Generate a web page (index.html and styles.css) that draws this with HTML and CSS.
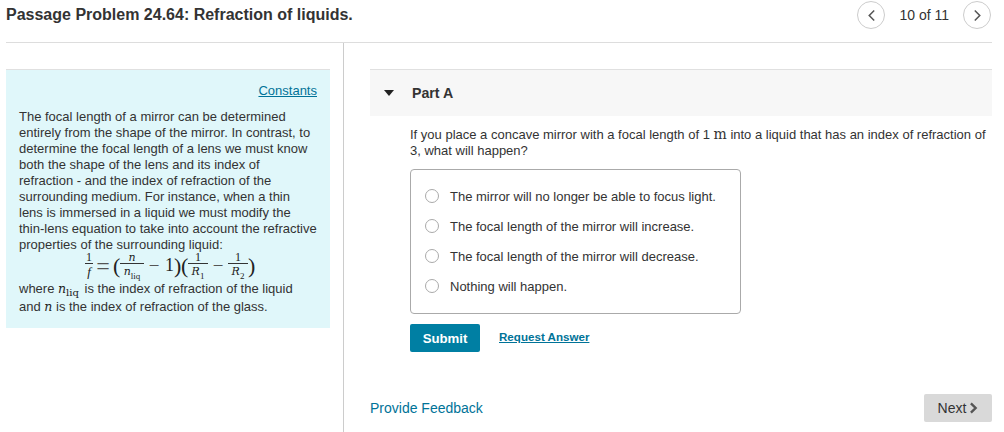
FILE: index.html
```html
<!DOCTYPE html>
<html lang="en">
<head>
<meta charset="utf-8">
<title>Passage Problem 24.64</title>
<link rel="stylesheet" href="styles.css">
</head>
<body>
<div class="page">
  <header class="top">
    <h1 class="title">Passage Problem 24.64: Refraction of liquids.</h1>
    <nav class="pager">
      <span class="circle"><svg viewBox="0 0 10 14" width="9" height="13"><path d="M8 1.5 2.5 7 8 12.5" fill="none" stroke="#555" stroke-width="1.7"/></svg></span>
      <span class="count">10 of 11</span>
      <span class="circle"><svg viewBox="0 0 10 14" width="9" height="13"><path d="M2 1.5 7.5 7 2 12.5" fill="none" stroke="#555" stroke-width="1.7"/></svg></span>
    </nav>
  </header>
  <div class="columns">
    <aside class="left">
      <div class="panel">
        <div class="const"><a href="#">Constants</a></div>
        <p class="passage">The focal length of a mirror can be determined<br>entirely from the shape of the mirror. In contrast, to<br>determine the focal length of a lens we must know<br>both the shape of the lens and its index of<br>refraction - and the index of refraction of the<br>surrounding medium. For instance, when a thin<br>lens is immersed in a liquid we must modify the<br>thin-lens equation to take into account the refractive<br>properties of the surrounding liquid:</p>
        <div class="eq">
          <span class="frac first"><span class="num">1</span><span class="den"><i>f</i></span></span>
          <span class="op eqs">=</span>
          <span class="par">(</span>
          <span class="frac nfrac"><span class="num"><i>n</i></span><span class="den"><i>n</i><sub>liq</sub></span></span>
          <span class="op">−</span><span class="one">1</span><span class="par">)</span><span class="par">(</span>
          <span class="frac"><span class="num">1</span><span class="den"><i>R</i><sub>1</sub></span></span>
          <span class="op">−</span>
          <span class="frac"><span class="num">1</span><span class="den"><i>R</i><sub>2</sub></span></span>
          <span class="par">)</span>
        </div>
        <p class="after">where <span class="m"><i>n</i><sub>liq</sub></span> is the index of refraction of the liquid<br>and <span class="m"><i>n</i></span> is the index of refraction of the glass.</p>
      </div>
    </aside>
    <main class="right">
      <div class="part">
        <span class="tri"></span>
        <h2 class="part-name">Part A</h2>
      </div>
      <div class="body">
        <p class="q">If you place a concave mirror with a focal length of 1 <span class="unit">m</span> into a liquid that has an index of refraction of<br>3, what will happen?</p>
        <div class="options">
          <label class="opt"><span class="radio"></span>The mirror will no longer be able to focus light.</label>
          <label class="opt"><span class="radio"></span>The focal length of the mirror will increase.</label>
          <label class="opt"><span class="radio"></span>The focal length of the mirror will decrease.</label>
          <label class="opt"><span class="radio"></span>Nothing will happen.</label>
        </div>
        <div class="actions">
          <button class="submit">Submit</button>
          <a class="req" href="#">Request Answer</a>
        </div>
      </div>
      <div class="foot">
        <a class="feedback" href="#">Provide Feedback</a>
        <button class="next">Next<svg viewBox="0 0 10 14" width="9" height="12"><path d="M2 1.5 7.5 7 2 12.5" fill="none" stroke="#555" stroke-width="2.8"/></svg></button>
      </div>
    </main>
  </div>
</div>
</body>
</html>
```
FILE: styles.css
```css
* { box-sizing: border-box; }
html, body { margin: 0; padding: 0; background: #fff; }
body { font-family: "Liberation Sans", Arial, sans-serif; color: #333; font-size: 13px; height: 432px; overflow: hidden; }
.page { width: 1004px; height: 432px; padding: 0 12px 0 6px; display: flex; flex-direction: column; }
.top { height: 43px; flex: none; display: flex; justify-content: space-between; align-items: flex-start; border-bottom: 1px solid #ddd; }
.title { margin: 6px 0 0; font-size: 16px; line-height: 18px; font-weight: 700; color: #333; }
.pager { display: flex; align-items: center; margin: 1px 1px 0 0; }
.circle { width: 28px; height: 28px; border: 1px solid #ccc; border-radius: 50%; display: flex; align-items: center; justify-content: center; background: #fff; }
.count { font-size: 14px; margin: 0 14px; }
.columns { flex: 1; display: flex; min-height: 0; }
.left { width: 338px; flex: none; border-right: 1px solid #ccc; padding-top: 26px; }
.panel { width: 324px; height: 259px; background: #e0f7fa; border-top: 1px solid #e0e0e0; padding: 13px 13px 0; }
.const { text-align: right; line-height: 16px; }
.const a { color: #007398; }
.passage { margin: 10px 0 0; line-height: 16px; color: #333; }
.eq { height: 29px; display: flex; align-items: center; font-family: "Liberation Serif", serif; font-size: 15px; padding-left: 66px; margin-top: -2px; color: #222; }
.frac { display: inline-flex; flex-direction: column; align-items: center; width: 20px; }
.frac.first { width: 8px; }
.frac.nfrac { width: 24px; }
.frac .num { border-bottom: 1px solid #333; font-size: 12px; line-height: 11px; width: 100%; text-align: center; }
.frac .den { font-size: 13px; line-height: 14px; white-space: nowrap; }
.frac i { font-family: "DejaVu Serif", serif; font-size: 11px; }
.frac.first .den { padding-top: 1px; }
.frac.first i { font-family: "Liberation Serif", serif; font-size: 13px; }
.den sub { font-family: "Liberation Serif", serif; font-size: 9px; line-height: 0; }
.op { font-size: 19px; width: 20px; text-align: center; color: #555; }
.eqs { font-size: 24px; width: 20px; line-height: 20px; }
.par { font-size: 22px; line-height: 22px; width: 7px; text-align: center; font-weight: 400; }
.one { font-size: 18px; width: 9px; text-align: center; margin-left: 1px; }
.after { margin: 0; line-height: 18px; }
.m { font-family: "DejaVu Serif", serif; font-size: 12.5px; color: #222; }
.m sub { font-family: "DejaVu Serif", serif; font-size: 10px; line-height: 0; vertical-align: -3px; margin-right: 2px; }
.right { flex: 1; min-width: 0; padding: 26px 0 0 26px; display: flex; flex-direction: column; }
.part { height: 47px; flex: none; background: #f7f7f7; border-top: 1px solid #e0e0e0; display: flex; align-items: center; padding-left: 14px; }
.tri { width: 0; height: 0; border-left: 5px solid transparent; border-right: 5px solid transparent; border-top: 6px solid #222; margin-right: 18px; }
.part-name { margin: 0; font-size: 14.2px; font-weight: 700; color: #333; }
.body { padding: 11px 0 0 40px; }
.q { margin: 0; line-height: 16px; color: #333; white-space: nowrap; }
.unit { font-family: "DejaVu Serif", serif; font-size: 14px; line-height: 0; }
.options { width: 331px; height: 145px; border: 1px solid #aaa; border-radius: 4px; margin-top: 10px; padding: 11px 0 0 14px; }
.opt { display: flex; align-items: center; height: 30px; color: #333; }
.radio { width: 14px; height: 14px; border: 1px solid #aaa; border-radius: 50%; background: #fff; margin-right: 11px; flex: none; }
.actions { display: flex; align-items: center; margin-top: 10px; }
.submit { width: 70px; height: 28px; border: 0; border-radius: 2px; background: #007fa3; color: #fff; font: 700 13.2px "Liberation Sans", sans-serif; padding: 0; }
.req { margin-left: 19px; margin-bottom: 3px; color: #007398; font-weight: 700; font-size: 11.6px; }
.foot { margin-top: auto; height: 38px; display: flex; justify-content: space-between; align-items: flex-start; }
.feedback { color: #007398; text-decoration: none; font-size: 14px; margin-top: 6px; }
.next { width: 68px; height: 28px; border: 0; border-radius: 2px; background: #d9d9d9; color: #333; font: 14px "Liberation Sans", sans-serif; display: flex; align-items: center; justify-content: center; gap: 3px; padding: 0; }
```
